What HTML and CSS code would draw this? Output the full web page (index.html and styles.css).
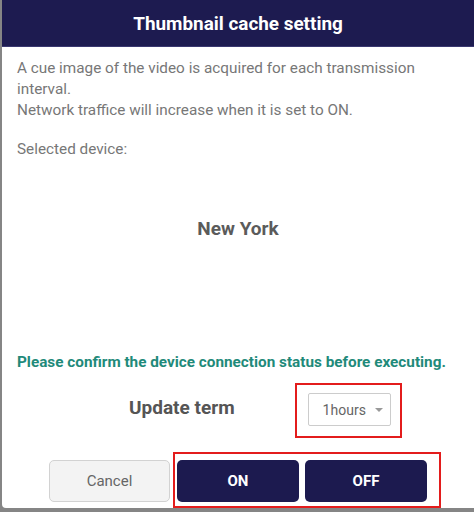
FILE: index.html
```html
<!DOCTYPE html>
<html>
<head>
<meta charset="utf-8">
<link rel="stylesheet" href="styles.css">
</head>
<body>
<div class="dialog">
  <div class="header">Thumbnail cache setting</div>
  <div class="content">
    <p class="desc">A cue image of the video is acquired for each transmission interval.<br>Network traffice will increase when it is set to ON.</p>
    <p class="desc selected">Selected device:</p>
    <div class="device">New York</div>
    <p class="warn">Please confirm the device connection status before executing.</p>
    <div class="update-row">
      <span class="update-label">Update term</span>
      <div class="mark mark-select">
        <div class="select"><span>1hours</span><span class="caret"></span></div>
      </div>
    </div>
    <div class="btn-row">
      <button class="btn cancel">Cancel</button>
      <div class="mark mark-btns">
        <button class="btn primary">ON</button>
        <button class="btn primary">OFF</button>
      </div>
    </div>
  </div>
</div>
</body>
</html>
```
FILE: styles.css
```css
html, body {
  margin: 0;
  padding: 0;
}
body {
  background: #858585;
  width: 474px;
  height: 512px;
  overflow: hidden;
  font-family: Roboto, "Liberation Sans", sans-serif;
}
.dialog {
  margin-left: 2px;
  width: 472px;
  height: 508px;
  background: #ffffff;
  border-bottom-left-radius: 4px;
  display: flex;
  flex-direction: column;
}
.header {
  height: 47px;
  background: #1d1b50;
  border-bottom: 1px solid #3a3870;
  box-sizing: border-box;
  color: #ffffff;
  font-weight: 700;
  font-size: 18.9px;
  display: flex;
  align-items: center;
  justify-content: center;
}
.content {
  padding: 11px 15px 0 15px;
  display: flex;
  flex-direction: column;
}
.desc {
  margin: 0;
  font-size: 15.3px;
  line-height: 21px;
  color: #777777;
}
.selected {
  margin-top: 18px;
}
.device {
  margin-top: 57px;
  line-height: 24px;
  text-align: center;
  font-size: 19px;
  font-weight: 700;
  color: #5b5b5b;
}
.warn {
  margin: 111px 0 0 0;
  line-height: 21px;
  font-size: 15.3px;
  font-weight: 700;
  color: #1f8a7a;
}
.update-row {
  margin-top: 10px;
  display: flex;
  align-items: center;
  padding-left: 112px;
  gap: 60px;
}
.update-label {
  font-size: 19px;
  font-weight: 700;
  color: #555555;
  padding-bottom: 7px;
}
.mark {
  border: 2px solid #e31c1c;
}
.mark-select {
  padding: 8px 9px 10px 11px;
}
.select {
  width: 83px;
  height: 33px;
  box-sizing: border-box;
  border: 1px solid #cccccc;
  border-radius: 2px;
  display: flex;
  align-items: center;
  padding-left: 14px;
  gap: 9px;
  font-size: 14px;
  color: #666666;
}
.caret {
  width: 0;
  height: 0;
  border-left: 4px solid transparent;
  border-right: 4px solid transparent;
  border-top: 4px solid #999999;
}
.btn-row {
  margin-top: 14px;
  display: flex;
  align-items: flex-start;
  padding-left: 32px;
}
.btn {
  height: 42px;
  border-radius: 5px;
  font-family: Roboto, "Liberation Sans", sans-serif;
  font-size: 15px;
  cursor: pointer;
  padding: 0;
}
.cancel {
  margin-top: 8px;
  width: 121px;
  margin-right: 3px;
  background: #f3f3f3;
  border: 1px solid #d2d2d2;
  color: #666666;
}
.mark-btns {
  padding: 6px 12px 4px 2px;
  display: flex;
  gap: 6px;
}
.primary {
  width: 122px;
  background: #1c1a4f;
  border: none;
  color: #ffffff;
  font-weight: 700;
}
```
